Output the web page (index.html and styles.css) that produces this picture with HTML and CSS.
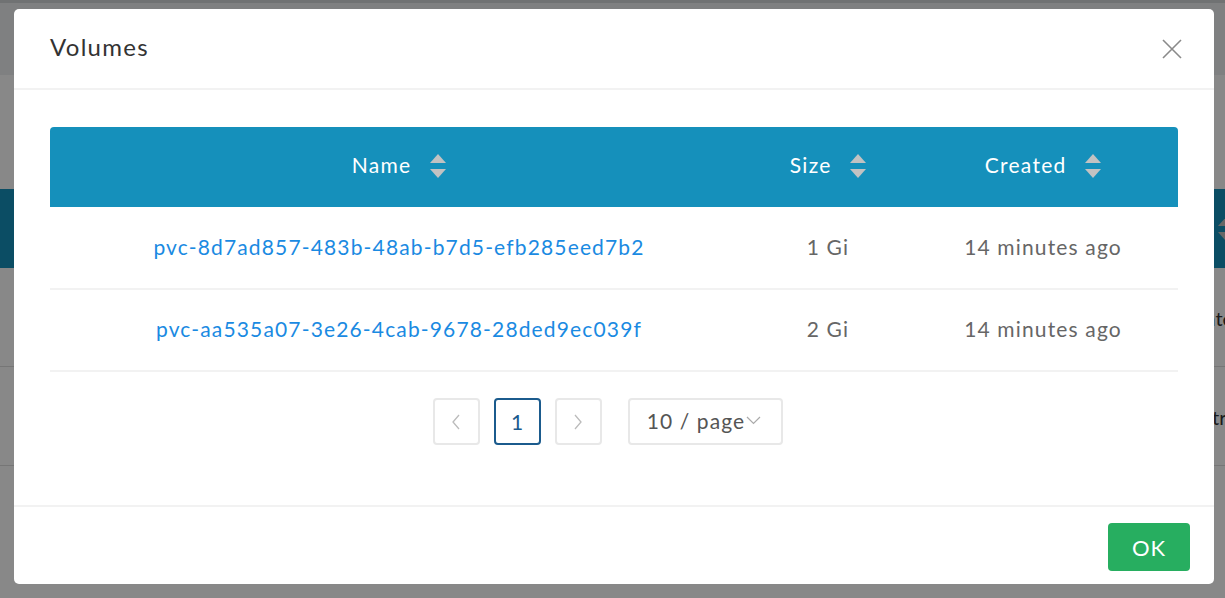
FILE: index.html
```html
<!DOCTYPE html>
<html lang="en">
<head>
    <meta charset="UTF-8">
    <meta name="viewport" content="width=device-width, initial-scale=1.0">
    <title>Volumes</title>
    <link rel="stylesheet" href="styles.css">
</head>
<body>
    <!-- page behind the dialog -->
    <div class="page">
        <div class="topbar"></div>
        <div class="bg-table">
            <div class="bg-head"><span class="bg-sort"><span class="tri up"></span><span class="tri down"></span></span></div>
            <div class="bg-row"><span class="bg-text">State</span></div>
            <div class="bg-row"><span class="bg-text second">Ctrl</span></div>
        </div>
    </div>
    <div class="mask"></div>

    <div class="modal">
        <div class="modal-header">
            <h2 class="modal-title">Volumes</h2>
            <button class="close" aria-label="Close">
                <svg width="20" height="20" viewBox="0 0 20 20"><path d="M1 1 L19 19 M19 1 L1 19" stroke="#8a8a8a" stroke-width="1.6" fill="none"/></svg>
            </button>
        </div>
        <div class="modal-body">
            <table class="table">
                <colgroup>
                    <col class="col-name">
                    <col class="col-size">
                    <col class="col-created">
                </colgroup>
                <thead>
                    <tr>
                        <th>Name <span class="sort"><span class="tri up"></span><span class="tri down"></span></span></th>
                        <th>Size <span class="sort"><span class="tri up"></span><span class="tri down"></span></span></th>
                        <th>Created <span class="sort"><span class="tri up"></span><span class="tri down"></span></span></th>
                    </tr>
                </thead>
                <tbody>
                    <tr>
                        <td><a href="#" class="link">pvc-8d7ad857-483b-48ab-b7d5-efb285eed7b2</a></td>
                        <td>1 Gi</td>
                        <td>14 minutes ago</td>
                    </tr>
                    <tr>
                        <td><a href="#" class="link">pvc-aa535a07-3e26-4cab-9678-28ded9ec039f</a></td>
                        <td>2 Gi</td>
                        <td>14 minutes ago</td>
                    </tr>
                </tbody>
            </table>
            <div class="pagination">
                <button class="page-btn">
                    <svg width="10" height="16" viewBox="0 0 10 16"><path d="M8 1 L2 8 L8 15" stroke="#bbb" stroke-width="1.3" fill="none"/></svg>
                </button>
                <button class="page-btn active">1</button>
                <button class="page-btn">
                    <svg width="10" height="16" viewBox="0 0 10 16"><path d="M2 1 L8 8 L2 15" stroke="#bbb" stroke-width="1.3" fill="none"/></svg>
                </button>
                <div class="page-size">10 / page<svg width="15" height="9" viewBox="0 0 15 9"><path d="M1 1 L7.5 7.5 L14 1" stroke="#aaa" stroke-width="1.2" fill="none"/></svg></div>
            </div>
        </div>
        <div class="modal-footer">
            <button class="btn-ok">OK</button>
        </div>
    </div>
</body>
</html>
```

FILE: styles.css
```css
/* page */
* {
    box-sizing: border-box;
}

body {
    margin: 0;
    width: 1225px;
    height: 598px;
    overflow: hidden;
    position: relative;
    font-family: Lato, "Open Sans", sans-serif;
    background: #fff;
}

.topbar {
    height: 75px;
    background: #eef1f2;
    border-top: 3px solid #d2d6d8;
}

.bg-table {
    margin-top: 114px;
}

.bg-head {
    height: 79px;
    background: #1591bb;
    position: relative;
}

.bg-sort {
    position: absolute;
    left: 1218px;
    top: 28px;
    display: flex;
    flex-direction: column;
    gap: 6px;
}

.bg-row {
    height: 99px;
    border-bottom: 1px solid #ddd;
    position: relative;
}

.bg-text {
    position: absolute;
    left: 1188px;
    top: 38px;
    font-size: 20px;
    color: #333;
}

.bg-text.second {
    left: 1199px;
}

.mask {
    position: absolute;
    inset: 0;
    background: rgba(0, 0, 0, 0.465);
}

/* dialog */
.modal {
    position: absolute;
    left: 14px;
    top: 9px;
    width: 1200px;
    height: 575px;
    background: #fff;
    border-radius: 5px;
    display: flex;
    flex-direction: column;
}

.modal-header {
    height: 81px;
    padding: 0 32px 0 36px;
    display: flex;
    align-items: center;
    justify-content: space-between;
    border-bottom: 2px solid #f2f2f2;
}

.modal-title {
    margin: 0 0 4px;
    font-size: 24px;
    font-weight: normal;
    color: #333;
    letter-spacing: 1.3px;
}

.close {
    background: none;
    border: none;
    padding: 0;
    display: flex;
}

.modal-body {
    padding: 37px 36px 36px 36px;
    border-bottom: 2px solid #f2f2f2;
}

.table {
    width: 100%;
    border-collapse: separate;
    border-spacing: 0;
    table-layout: fixed;
}

.col-name {
    width: 698px;
}

.col-size {
    width: 160px;
}

.col-created {
    width: 270px;
}

.table th {
    height: 80px;
    background: #1590bb;
    color: #fff;
    font-size: 21px;
    font-weight: normal;
    letter-spacing: 1.3px;
    padding: 0 0 4px;
    text-align: center;
    white-space: nowrap;
}

.table th:first-child {
    border-top-left-radius: 4px;
}

.table th:last-child {
    border-top-right-radius: 4px;
}

.sort {
    display: inline-flex;
    flex-direction: column;
    gap: 6px;
    vertical-align: middle;
    margin-left: 12px;
    margin-top: -2px;
}

.tri {
    width: 0;
    height: 0;
    border-left: 8px solid transparent;
    border-right: 8px solid transparent;
}

.tri.up {
    border-bottom: 9px solid #c2c2c2;
}

.tri.down {
    border-top: 9px solid #c2c2c2;
}

.table td {
    height: 82px;
    padding: 0 0 3px;
    text-align: center;
    font-size: 21px;
    letter-spacing: 1.15px;
    color: #666;
    border-bottom: 2px solid #f2f2f2;
}

.table tbody tr:first-child td {
    height: 83px;
}

.link {
    color: #1a8ae2;
    text-decoration: none;
}

.pagination {
    margin: 26px 0 24px -13px;
    display: flex;
    justify-content: center;
    gap: 14px;
}

.page-btn {
    width: 47px;
    height: 47px;
    border: 2px solid #e8e8e8;
    border-radius: 4px;
    background: #fff;
    font-family: inherit;
    font-size: 21px;
    color: #1b5b8d;
    display: flex;
    align-items: center;
    justify-content: center;
    padding: 0;
}

.page-btn.active {
    border-color: #1b5b8d;
}

.page-size {
    margin-left: 12px;
    width: 155px;
    height: 47px;
    border: 2px solid #e8e8e8;
    border-radius: 4px;
    display: flex;
    align-items: center;
    justify-content: center;
    gap: 1px;
    font-size: 21px;
    letter-spacing: 1.1px;
    color: #555;
    padding: 0 2px 2px 0;
}

.modal-footer {
    flex: 1;
    display: flex;
    justify-content: flex-end;
    padding: 16px 24px 0 0;
}

.btn-ok {
    width: 82px;
    height: 48px;
    border: none;
    border-radius: 4px;
    background: #27ae60;
    color: #fff;
    font-family: inherit;
    font-size: 22px;
    letter-spacing: 1px;
    padding: 0;
}
```
